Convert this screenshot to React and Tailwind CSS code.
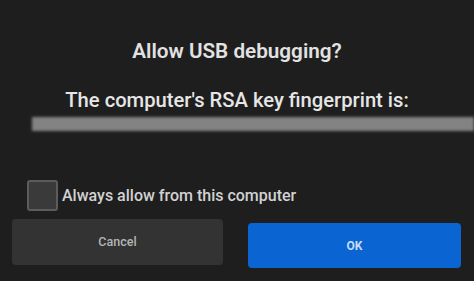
import React, { useState } from "react";

export default function App() {
  const [always, setAlways] = useState(false);

  return (
    <div className="w-[474px] h-[281px] bg-[#1e1e1e] overflow-hidden font-['Roboto',sans-serif] flex flex-col">
      <div className="pt-[39px] text-center text-[20.7px] font-semibold leading-[24px] text-[#e2e2e2]">
        Allow USB debugging?
      </div>
      <div className="mt-[25px] text-center text-[20.2px] font-medium leading-[24px] text-[#e6e6e6]">
        The computer's RSA key fingerprint is:
      </div>

      {/* fingerprint, blurred out */}
      <div className="mt-[5px] ml-[32px] w-[442px] h-[14px] bg-[#8e8e8e] blur-[1.5px] opacity-90" />

      <label className="mt-[49px] ml-[27px] flex items-center gap-[4px] cursor-pointer">
        <input type="checkbox" checked={always} onChange={(e) => setAlways(e.target.checked)} className="sr-only" />
        <span className="w-[31px] h-[31px] rounded-[3px] border-2 border-[#5c5c5c] bg-[#3a3a3a]" />
        <span className="text-[16px] font-medium text-[#d2d2d2]">Always allow from this computer</span>
      </label>

      <div className="mt-[8px] flex items-start px-[12px]">
        <button className="w-[211px] h-[46px] rounded-[4px] bg-[#333333] text-[12.5px] font-medium text-[#b5b5b5] cursor-pointer">
          Cancel
        </button>
        <button className="ml-[25px] mt-[4px] w-[213px] h-[45px] rounded-[4px] bg-[#0a64d2] text-[12px] font-bold text-[#c9dcf5] cursor-pointer">
          OK
        </button>
      </div>
    </div>
  );
}
